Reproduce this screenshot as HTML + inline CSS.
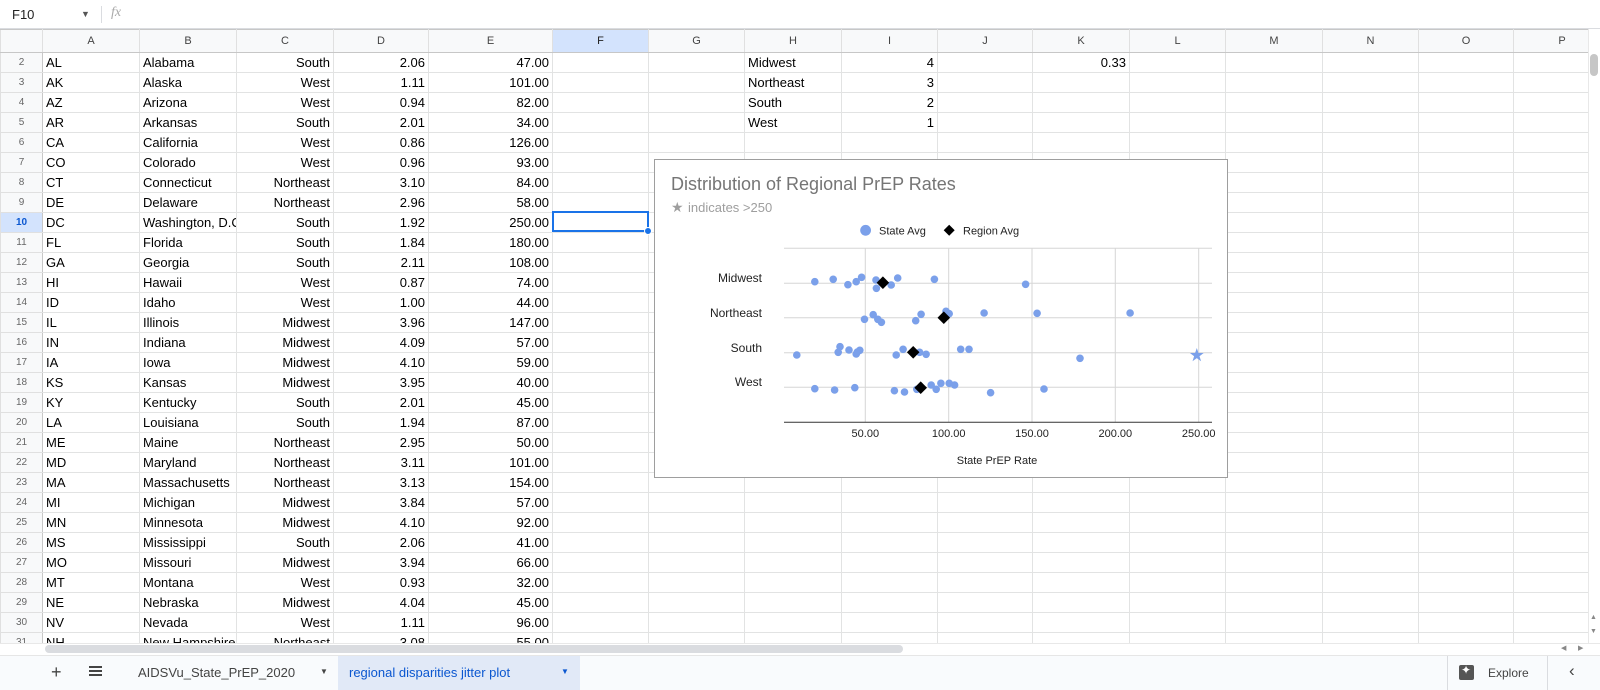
<!DOCTYPE html>
<html><head><meta charset="utf-8"><style>
*{box-sizing:border-box;margin:0;padding:0}
body{width:1600px;height:690px;overflow:hidden;background:#fff;font-family:"Liberation Sans",Arial,sans-serif;position:relative}
#fb{position:absolute;left:0;top:0;width:1600px;height:29px;border-bottom:1px solid #dadce0;background:#fff}
#grid{position:absolute;left:0;top:29px;width:1588px;height:614px;overflow:hidden}
table{border-collapse:collapse;table-layout:fixed;width:1610px}
td,th{height:20px;border:1px solid #e2e3e3;font-size:13px;color:#000;white-space:nowrap;overflow:hidden;padding:0 3px;font-weight:normal;text-align:left}
tr.h th{height:23px;background:#f8f9fa;color:#444;font-size:11px;text-align:center;border-color:#c7c7c7 #e0e0e0 #c7c7c7 #e0e0e0}
tbody th{background:#f8f9fa;color:#666;font-size:10px;text-align:center;border-color:#e0e0e0 #c7c7c7 #e0e0e0 #e0e0e0}
td.r{text-align:right}
.sel{background:#d3e3fd !important;color:#0b57d0 !important;font-weight:bold !important}
</style></head><body>
<div id="fb">
<span style="position:absolute;left:12px;top:7px;font-size:13px;color:#222">F10</span>
<span style="position:absolute;left:81px;top:9px;font-size:9px;color:#555">▼</span>
<div style="position:absolute;left:101px;top:6px;width:1px;height:17px;background:#dadce0"></div>
<span style="position:absolute;left:111px;top:5px;font-size:14px;color:#aaa;font-style:italic;font-family:'Liberation Serif',serif">fx</span>
</div>
<div id="grid"><table>
<colgroup><col style="width:42px"><col style="width:97px"><col style="width:97px"><col style="width:97px"><col style="width:95px"><col style="width:124px"><col style="width:96px"><col style="width:96px"><col style="width:97px"><col style="width:96px"><col style="width:95px"><col style="width:97px"><col style="width:96px"><col style="width:97px"><col style="width:96px"><col style="width:95px"><col style="width:97px"></colgroup>
<tr class="h"><th></th><th>A</th><th>B</th><th>C</th><th>D</th><th>E</th><th class="sel" style="font-weight:normal!important;color:#222!important">F</th><th>G</th><th>H</th><th>I</th><th>J</th><th>K</th><th>L</th><th>M</th><th>N</th><th>O</th><th>P</th></tr>
<tbody>
<tr><th>2</th><td>AL</td><td>Alabama</td><td class="r">South</td><td class="r">2.06</td><td class="r">47.00</td><td></td><td></td><td>Midwest</td><td class="r">4</td><td></td><td class="r">0.33</td><td></td><td></td><td></td><td></td><td></td></tr>
<tr><th>3</th><td>AK</td><td>Alaska</td><td class="r">West</td><td class="r">1.11</td><td class="r">101.00</td><td></td><td></td><td>Northeast</td><td class="r">3</td><td></td><td></td><td></td><td></td><td></td><td></td><td></td></tr>
<tr><th>4</th><td>AZ</td><td>Arizona</td><td class="r">West</td><td class="r">0.94</td><td class="r">82.00</td><td></td><td></td><td>South</td><td class="r">2</td><td></td><td></td><td></td><td></td><td></td><td></td><td></td></tr>
<tr><th>5</th><td>AR</td><td>Arkansas</td><td class="r">South</td><td class="r">2.01</td><td class="r">34.00</td><td></td><td></td><td>West</td><td class="r">1</td><td></td><td></td><td></td><td></td><td></td><td></td><td></td></tr>
<tr><th>6</th><td>CA</td><td>California</td><td class="r">West</td><td class="r">0.86</td><td class="r">126.00</td><td></td><td></td><td></td><td></td><td></td><td></td><td></td><td></td><td></td><td></td><td></td></tr>
<tr><th>7</th><td>CO</td><td>Colorado</td><td class="r">West</td><td class="r">0.96</td><td class="r">93.00</td><td></td><td></td><td></td><td></td><td></td><td></td><td></td><td></td><td></td><td></td><td></td></tr>
<tr><th>8</th><td>CT</td><td>Connecticut</td><td class="r">Northeast</td><td class="r">3.10</td><td class="r">84.00</td><td></td><td></td><td></td><td></td><td></td><td></td><td></td><td></td><td></td><td></td><td></td></tr>
<tr><th>9</th><td>DE</td><td>Delaware</td><td class="r">Northeast</td><td class="r">2.96</td><td class="r">58.00</td><td></td><td></td><td></td><td></td><td></td><td></td><td></td><td></td><td></td><td></td><td></td></tr>
<tr><th class="sel">10</th><td>DC</td><td style="text-overflow:clip">Washington, D.C.</td><td class="r">South</td><td class="r">1.92</td><td class="r">250.00</td><td></td><td></td><td></td><td></td><td></td><td></td><td></td><td></td><td></td><td></td><td></td></tr>
<tr><th>11</th><td>FL</td><td>Florida</td><td class="r">South</td><td class="r">1.84</td><td class="r">180.00</td><td></td><td></td><td></td><td></td><td></td><td></td><td></td><td></td><td></td><td></td><td></td></tr>
<tr><th>12</th><td>GA</td><td>Georgia</td><td class="r">South</td><td class="r">2.11</td><td class="r">108.00</td><td></td><td></td><td></td><td></td><td></td><td></td><td></td><td></td><td></td><td></td><td></td></tr>
<tr><th>13</th><td>HI</td><td>Hawaii</td><td class="r">West</td><td class="r">0.87</td><td class="r">74.00</td><td></td><td></td><td></td><td></td><td></td><td></td><td></td><td></td><td></td><td></td><td></td></tr>
<tr><th>14</th><td>ID</td><td>Idaho</td><td class="r">West</td><td class="r">1.00</td><td class="r">44.00</td><td></td><td></td><td></td><td></td><td></td><td></td><td></td><td></td><td></td><td></td><td></td></tr>
<tr><th>15</th><td>IL</td><td>Illinois</td><td class="r">Midwest</td><td class="r">3.96</td><td class="r">147.00</td><td></td><td></td><td></td><td></td><td></td><td></td><td></td><td></td><td></td><td></td><td></td></tr>
<tr><th>16</th><td>IN</td><td>Indiana</td><td class="r">Midwest</td><td class="r">4.09</td><td class="r">57.00</td><td></td><td></td><td></td><td></td><td></td><td></td><td></td><td></td><td></td><td></td><td></td></tr>
<tr><th>17</th><td>IA</td><td>Iowa</td><td class="r">Midwest</td><td class="r">4.10</td><td class="r">59.00</td><td></td><td></td><td></td><td></td><td></td><td></td><td></td><td></td><td></td><td></td><td></td></tr>
<tr><th>18</th><td>KS</td><td>Kansas</td><td class="r">Midwest</td><td class="r">3.95</td><td class="r">40.00</td><td></td><td></td><td></td><td></td><td></td><td></td><td></td><td></td><td></td><td></td><td></td></tr>
<tr><th>19</th><td>KY</td><td>Kentucky</td><td class="r">South</td><td class="r">2.01</td><td class="r">45.00</td><td></td><td></td><td></td><td></td><td></td><td></td><td></td><td></td><td></td><td></td><td></td></tr>
<tr><th>20</th><td>LA</td><td>Louisiana</td><td class="r">South</td><td class="r">1.94</td><td class="r">87.00</td><td></td><td></td><td></td><td></td><td></td><td></td><td></td><td></td><td></td><td></td><td></td></tr>
<tr><th>21</th><td>ME</td><td>Maine</td><td class="r">Northeast</td><td class="r">2.95</td><td class="r">50.00</td><td></td><td></td><td></td><td></td><td></td><td></td><td></td><td></td><td></td><td></td><td></td></tr>
<tr><th>22</th><td>MD</td><td>Maryland</td><td class="r">Northeast</td><td class="r">3.11</td><td class="r">101.00</td><td></td><td></td><td></td><td></td><td></td><td></td><td></td><td></td><td></td><td></td><td></td></tr>
<tr><th>23</th><td>MA</td><td>Massachusetts</td><td class="r">Northeast</td><td class="r">3.13</td><td class="r">154.00</td><td></td><td></td><td></td><td></td><td></td><td></td><td></td><td></td><td></td><td></td><td></td></tr>
<tr><th>24</th><td>MI</td><td>Michigan</td><td class="r">Midwest</td><td class="r">3.84</td><td class="r">57.00</td><td></td><td></td><td></td><td></td><td></td><td></td><td></td><td></td><td></td><td></td><td></td></tr>
<tr><th>25</th><td>MN</td><td>Minnesota</td><td class="r">Midwest</td><td class="r">4.10</td><td class="r">92.00</td><td></td><td></td><td></td><td></td><td></td><td></td><td></td><td></td><td></td><td></td><td></td></tr>
<tr><th>26</th><td>MS</td><td>Mississippi</td><td class="r">South</td><td class="r">2.06</td><td class="r">41.00</td><td></td><td></td><td></td><td></td><td></td><td></td><td></td><td></td><td></td><td></td><td></td></tr>
<tr><th>27</th><td>MO</td><td>Missouri</td><td class="r">Midwest</td><td class="r">3.94</td><td class="r">66.00</td><td></td><td></td><td></td><td></td><td></td><td></td><td></td><td></td><td></td><td></td><td></td></tr>
<tr><th>28</th><td>MT</td><td>Montana</td><td class="r">West</td><td class="r">0.93</td><td class="r">32.00</td><td></td><td></td><td></td><td></td><td></td><td></td><td></td><td></td><td></td><td></td><td></td></tr>
<tr><th>29</th><td>NE</td><td>Nebraska</td><td class="r">Midwest</td><td class="r">4.04</td><td class="r">45.00</td><td></td><td></td><td></td><td></td><td></td><td></td><td></td><td></td><td></td><td></td><td></td></tr>
<tr><th>30</th><td>NV</td><td>Nevada</td><td class="r">West</td><td class="r">1.11</td><td class="r">96.00</td><td></td><td></td><td></td><td></td><td></td><td></td><td></td><td></td><td></td><td></td><td></td></tr>
<tr><th>31</th><td>NH</td><td>New Hampshire</td><td class="r">Northeast</td><td class="r">3.08</td><td class="r">55.00</td><td></td><td></td><td></td><td></td><td></td><td></td><td></td><td></td><td></td><td></td><td></td></tr>
</tbody></table></div>

<!-- selection -->
<div style="position:absolute;left:552px;top:211px;width:97px;height:21px;border:2px solid #1a73e8"></div>
<div style="position:absolute;left:644px;top:227px;width:8px;height:8px;border-radius:50%;background:#1a73e8;border:1px solid #fff"></div>

<!-- vertical scrollbar -->
<div style="position:absolute;left:1588px;top:29px;width:12px;height:626px;background:#fff;border-left:1px solid #e8e8e8"></div>
<div style="position:absolute;left:1590px;top:54px;width:8px;height:22px;border-radius:4px;background:#c6c6c6"></div>
<div style="position:absolute;left:1590px;top:614px;font-size:7px;color:#888">▲</div>
<div style="position:absolute;left:1590px;top:628px;font-size:7px;color:#888">▼</div>

<!-- horizontal scrollbar -->
<div style="position:absolute;left:0;top:643px;width:1600px;height:12px;background:#fff;border-top:1px solid #e8e8e8"></div>
<div style="position:absolute;left:45px;top:645px;width:858px;height:8px;border-radius:4px;background:#dadce0"></div>
<div style="position:absolute;left:1561px;top:644px;font-size:7px;color:#888">◀</div>
<div style="position:absolute;left:1578px;top:644px;font-size:7px;color:#888">▶</div>

<!-- tab bar -->
<div style="position:absolute;left:0;top:655px;width:1600px;height:35px;background:#f9fbfd;border-top:1px solid #e6e6e6"></div>
<div style="position:absolute;left:51px;top:662px;font-size:18px;color:#444">+</div>
<div style="position:absolute;left:89px;top:666px;width:13px;height:10px;border-top:2px solid #444;border-bottom:2px solid #444"></div>
<div style="position:absolute;left:89px;top:670px;width:13px;height:2px;background:#444"></div>
<div style="position:absolute;left:138px;top:665px;font-size:13px;color:#444">AIDSVu_State_PrEP_2020</div>
<div style="position:absolute;left:320px;top:667px;font-size:8px;color:#444">▼</div>
<div style="position:absolute;left:338px;top:656px;width:242px;height:34px;background:#e1e9f7"></div>
<div style="position:absolute;left:349px;top:665px;font-size:13px;color:#0b57d0">regional disparities jitter plot</div>
<div style="position:absolute;left:561px;top:667px;font-size:8px;color:#0b57d0">▼</div>
<div style="position:absolute;left:1447px;top:656px;width:1px;height:34px;background:#dadce0"></div>
<div style="position:absolute;left:1547px;top:656px;width:1px;height:34px;background:#dadce0"></div>
<div style="position:absolute;left:1459px;top:665px;width:15px;height:15px;background:#555;border-radius:2px"></div>
<div style="position:absolute;left:1461px;top:663px;font-size:12px;color:#fff">✦</div>
<div style="position:absolute;left:1488px;top:666px;font-size:12px;color:#444">Explore</div>
<div style="position:absolute;left:1569px;top:661px;font-size:17px;color:#444">‹</div>

<!-- chart -->
<div style="position:absolute;left:654px;top:159px;width:574px;height:319px;background:#fff;border:1px solid #9e9e9e"></div>
<svg style="position:absolute;left:0;top:0" width="1600" height="690" viewBox="0 0 1600 690">
<g font-family="Liberation Sans, Arial, sans-serif">
<text x="671" y="190" font-size="18" fill="#757575">Distribution of Regional PrEP Rates</text>
<text x="671" y="212" font-size="14" fill="#9e9e9e">★</text>
<text x="688" y="212" font-size="13" fill="#9e9e9e">indicates &gt;250</text>
<circle cx="865.6" cy="230.3" r="5.4" fill="#7ba0ea"/>
<text x="879" y="234.5" font-size="11" fill="#222">State Avg</text>
<path d="M949.2 224.8 L954.7 230.3 L949.2 235.8 L943.7 230.3Z" fill="#000"/>
<text x="963" y="234.5" font-size="11" fill="#222">Region Avg</text>
<g stroke="#d6d6d6" stroke-width="1">
<line x1="784" y1="248.3" x2="1212" y2="248.3"/>
<line x1="784" y1="283.3" x2="1212" y2="283.3"/>
<line x1="784" y1="317.7" x2="1212" y2="317.7"/>
<line x1="784" y1="352.7" x2="1212" y2="352.7"/>
<line x1="784" y1="387.3" x2="1212" y2="387.3"/>
<line x1="865.3" y1="248" x2="865.3" y2="422"/>
<line x1="948.7" y1="248" x2="948.7" y2="422"/>
<line x1="1032" y1="248" x2="1032" y2="422"/>
<line x1="1115.3" y1="248" x2="1115.3" y2="422"/>
<line x1="1198.7" y1="248" x2="1198.7" y2="422"/>
</g>
<line x1="784" y1="422.3" x2="1212" y2="422.3" stroke="#333" stroke-width="1"/>
<g font-size="12" fill="#222" text-anchor="end">
<text x="762" y="282">Midwest</text>
<text x="762" y="317">Northeast</text>
<text x="762" y="352">South</text>
<text x="762" y="386">West</text>
</g>
<g font-size="11" fill="#222" text-anchor="middle">
<text x="865.3" y="437">50.00</text>
<text x="948.7" y="437">100.00</text>
<text x="1032" y="437">150.00</text>
<text x="1115.3" y="437">200.00</text>
<text x="1198.7" y="437">250.00</text>
<text x="997" y="464">State PrEP Rate</text>
</g>
<g fill="#7ba0ea">
<circle cx="814.8" cy="281.7" r="3.8"/><circle cx="833.2" cy="279.3" r="3.8"/><circle cx="847.9" cy="284.7" r="3.8"/><circle cx="856.2" cy="281.7" r="3.8"/><circle cx="861.6" cy="277.3" r="3.8"/><circle cx="876" cy="280" r="3.8"/><circle cx="876.4" cy="288.3" r="3.8"/><circle cx="891.2" cy="285" r="3.8"/><circle cx="897.7" cy="278" r="3.8"/><circle cx="934.4" cy="279.3" r="3.8"/><circle cx="1025.6" cy="284.3" r="3.8"/>
<circle cx="864.5" cy="319.3" r="3.8"/><circle cx="873.2" cy="314.7" r="3.8"/><circle cx="877.8" cy="319.3" r="3.8"/><circle cx="881.4" cy="322.3" r="3.8"/><circle cx="915.7" cy="320.7" r="3.8"/><circle cx="921.1" cy="314.3" r="3.8"/><circle cx="946" cy="311.3" r="3.8"/><circle cx="949.2" cy="313.7" r="3.8"/><circle cx="984.1" cy="313" r="3.8"/><circle cx="1037.1" cy="313.3" r="3.8"/><circle cx="1130.1" cy="313" r="3.8"/>
<circle cx="796.8" cy="355" r="3.8"/><circle cx="838.2" cy="352.3" r="3.8"/><circle cx="840" cy="346.7" r="3.8"/><circle cx="849" cy="350" r="3.8"/><circle cx="856.2" cy="354" r="3.8"/><circle cx="857.3" cy="352" r="3.8"/><circle cx="859.8" cy="350.3" r="3.8"/><circle cx="896.2" cy="355" r="3.8"/><circle cx="903.1" cy="349.3" r="3.8"/><circle cx="919.6" cy="352.3" r="3.8"/><circle cx="926.1" cy="354.3" r="3.8"/><circle cx="960.7" cy="349.3" r="3.8"/><circle cx="969" cy="349.3" r="3.8"/><circle cx="1080" cy="358.3" r="3.8"/>
<circle cx="814.8" cy="388.7" r="3.8"/><circle cx="834.6" cy="390" r="3.8"/><circle cx="854.8" cy="387.7" r="3.8"/><circle cx="894.4" cy="390.7" r="3.8"/><circle cx="904.5" cy="392" r="3.8"/><circle cx="916.8" cy="389.3" r="3.8"/><circle cx="931.2" cy="385" r="3.8"/><circle cx="936.2" cy="389.3" r="3.8"/><circle cx="940.9" cy="383.3" r="3.8"/><circle cx="949.2" cy="383.3" r="3.8"/><circle cx="954.6" cy="385" r="3.8"/><circle cx="990.6" cy="392.7" r="3.8"/><circle cx="1044" cy="389" r="3.8"/>
<path d="M1196.8 348 L1198.5 353 L1203.7 353 L1199.5 356.2 L1201.1 361.2 L1196.8 358.1 L1192.5 361.2 L1194.1 356.2 L1189.9 353 L1195.1 353Z"/>
</g>
<g fill="#000">
<path d="M882.9 276.4 L889.2 282.7 L882.9 289 L876.6 282.7Z"/>
<path d="M943.8 311.4 L950.1 317.7 L943.8 324 L937.5 317.7Z"/>
<path d="M913.2 346 L919.5 352.3 L913.2 358.6 L906.9 352.3Z"/>
<path d="M920.7 381.4 L927 387.7 L920.7 394 L914.4 387.7Z"/>
</g>
</g>
</svg>
</body></html>
